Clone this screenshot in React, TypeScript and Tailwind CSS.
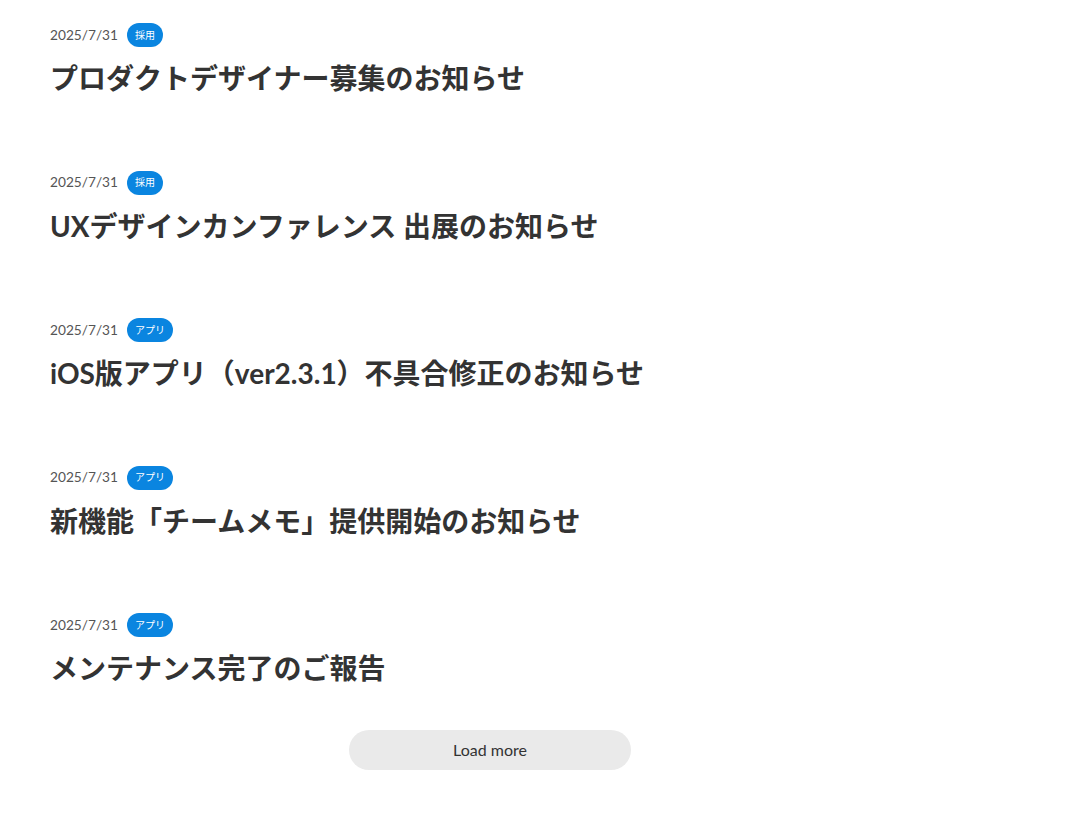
import React from "react";

const items = [
  { date: "2025/7/31", tag: "採用", title: "プロダクトデザイナー募集のお知らせ" },
  { date: "2025/7/31", tag: "採用", title: "UXデザインカンファレンス 出展のお知らせ" },
  { date: "2025/7/31", tag: "アプリ", title: "iOS版アプリ（ver2.3.1）不具合修正のお知らせ" },
  { date: "2025/7/31", tag: "アプリ", title: "新機能「チームメモ」提供開始のお知らせ" },
  { date: "2025/7/31", tag: "アプリ", title: "メンテナンス完了のご報告" },
];

export default function App() {
  return (
    <div
      className="min-h-screen bg-white text-[#333]"
      style={{ fontFamily: 'Lato, "Noto Sans CJK JP", sans-serif' }}
    >
      <div className="w-[980px] px-[50px] pt-[23px] pb-[43px]">
        <ul className="flex flex-col gap-[71.5px]">
          {items.map((it, i) => (
            <li key={i} className="flex flex-col gap-[10px]">
              <div className="flex items-center gap-[9px] h-6">
                <span className="text-[13.7px] text-[#555]">{it.date}</span>
                <span className="h-6 px-2 rounded-full bg-[#0a85e0] text-white text-[10px] flex items-center">
                  {it.tag}
                </span>
              </div>
              <h2 className="text-[28px] leading-[42px] font-bold text-[#333]">{it.title}</h2>
            </li>
          ))}
        </ul>
        <div className="flex justify-center mt-[41px]">
          <button className="w-[282px] h-10 rounded-full bg-[#eaeaea] text-base text-[#333]">
            Load more
          </button>
        </div>
      </div>
    </div>
  );
}
